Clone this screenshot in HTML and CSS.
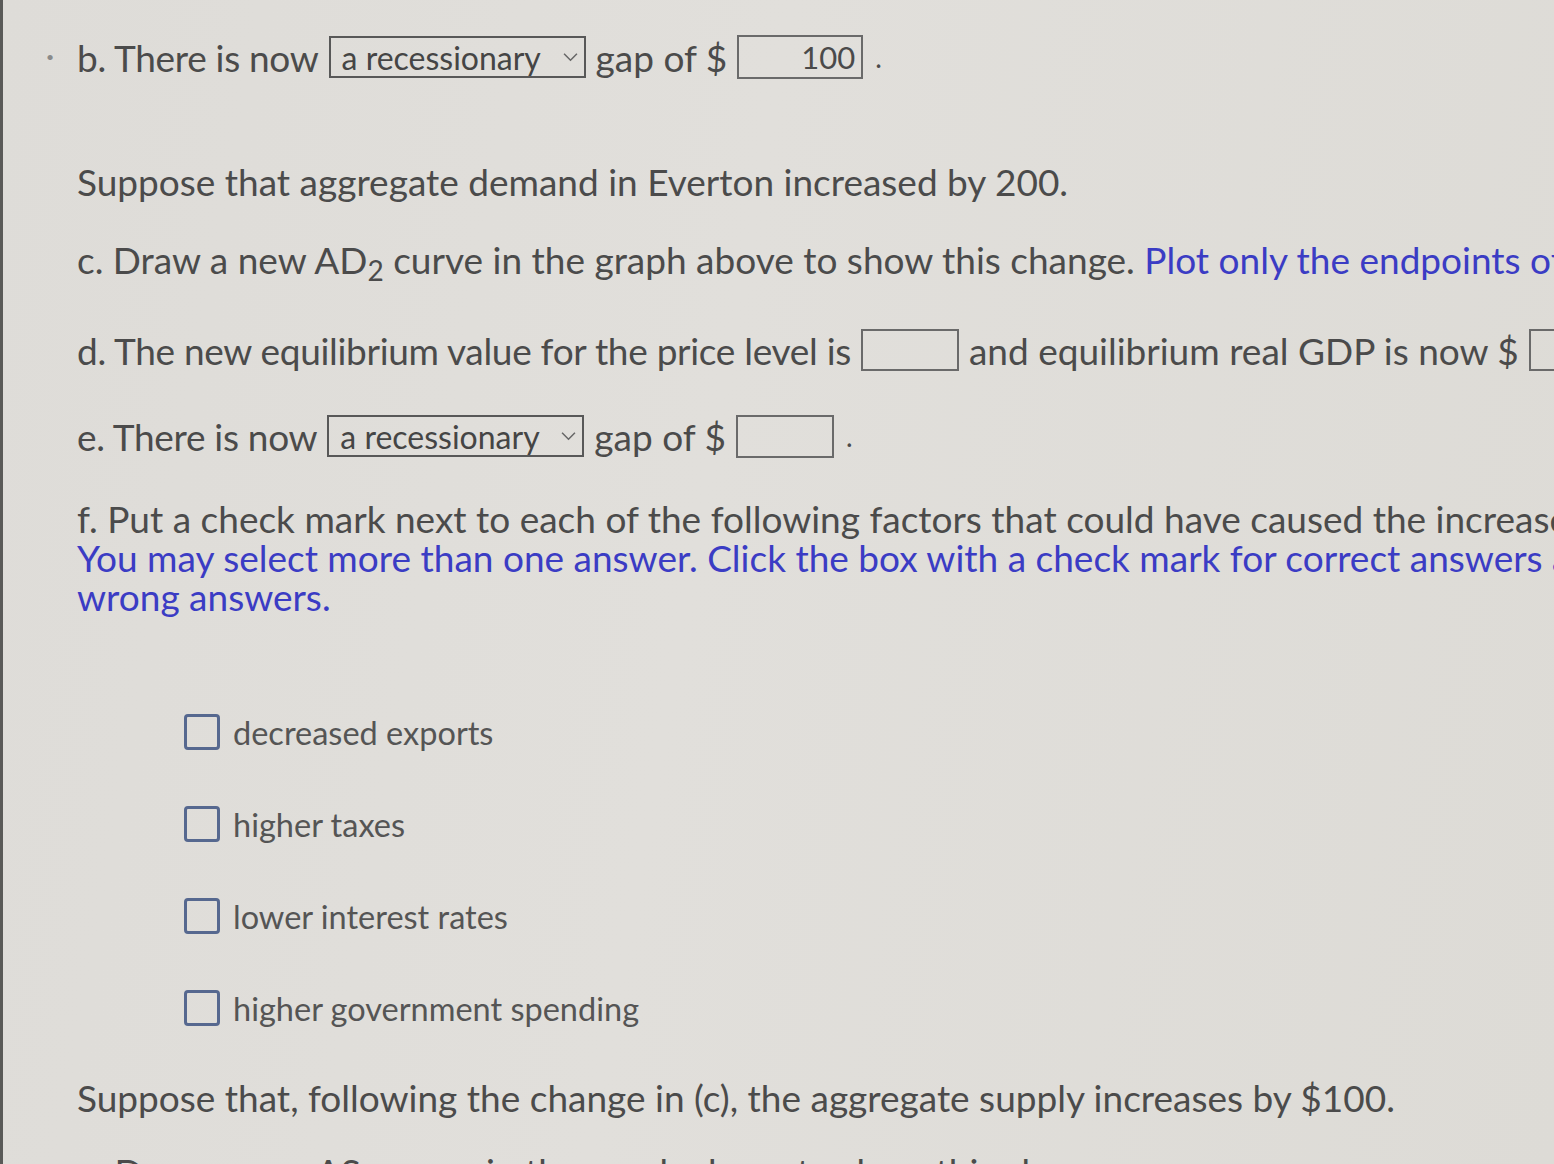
FILE: index.html
```html
<!DOCTYPE html>
<html>
<head>
<meta charset="utf-8">
<link rel="stylesheet" href="styles.css">
</head>
<body>
<div class="page">
  <div class="row row-b">
    <span class="bullet">•</span>
    <span class="tight">b. There is now</span>
    <span class="select">a recessionary<svg class="chev" viewBox="0 0 14 9"><path d="M1 1.5 L7 7.5 L13 1.5" fill="none" stroke="#666" stroke-width="1.4"/></svg></span>
    <span>gap of $</span>
    <span class="input val">100</span>
    <span class="dot">.</span>
  </div>
  <div class="row row-sup">Suppose that aggregate demand in Everton increased by 200.</div>
  <div class="row row-c">c. Draw a new AD<sub>2</sub> curve in the graph above to show this change. <span class="blue">Plot only the endpoints of the curve.</span></div>
  <div class="row row-d">
    <span class="tight">d. The new equilibrium value for the price level is</span>
    <span class="input small"></span>
    <span>and equilibrium real GDP is now $</span>
    <span class="input small"></span>
  </div>
  <div class="row row-e">
    <span class="tight">e. There is now</span>
    <span class="select">a recessionary<svg class="chev" viewBox="0 0 14 9"><path d="M1 1.5 L7 7.5 L13 1.5" fill="none" stroke="#666" stroke-width="1.4"/></svg></span>
    <span>gap of $</span>
    <span class="input small2"></span>
    <span class="dot">.</span>
  </div>
  <div class="para">
    <div class="pline">f. Put a check mark next to each of the following factors that could have caused the increase in aggregate demand.</div>
    <div class="pline blue">You may select more than one answer. Click the box with a check mark for correct answers and click to empty the box for the</div>
    <div class="pline blue">wrong answers.</div>
  </div>
  <div class="options">
    <label class="opt"><span class="box"></span><span class="olabel">decreased exports</span></label>
    <label class="opt"><span class="box"></span><span class="olabel">higher taxes</span></label>
    <label class="opt"><span class="box"></span><span class="olabel">lower interest rates</span></label>
    <label class="opt"><span class="box"></span><span class="olabel">higher government spending</span></label>
  </div>
  <div class="row row-final">Suppose that, following the change in (c), the aggregate supply increases by $100.</div>
  <div class="row row-last">g. Draw a new AS<sub>2</sub> curve in the graph above to show this change.</div>
</div>
</body>
</html>
```

FILE: styles.css
```css
html, body {
  margin: 0;
  padding: 0;
  height: 100%;
  overflow: hidden;
}
body {
  background: linear-gradient(100deg, #dedcd8 0%, #e1dfdb 45%, #dddbd6 100%);
  border-left: 3px solid #5a5a58;
  box-sizing: border-box;
  font-family: Lato, "Open Sans", sans-serif;
  color: #4b4b4b;
  font-size: 37px;
}
.page {
  padding: 34px 0 0 74px;
  white-space: nowrap;
}
.row {
  height: 46px;
  display: flex;
  align-items: center;
  gap: 10px;
}
.row > * { flex-shrink: 0; }
.tight { letter-spacing: -0.3px; }
.row-b { position: relative; }
.bullet {
  position: absolute;
  left: -31px;
  top: 14px;
  font-size: 14px;
  color: #8a8a8a;
}
.row-sup { margin-top: 78px; }
.row-c { margin-top: 33px; display: block; line-height: 46px; }
.row-c sub, .row-last sub { font-size: 28px; vertical-align: -7px; line-height: 0; }
.blue { color: #3b3cc4; }
.row-d { margin-top: 44px; }
.row-e { margin-top: 40px; }
.select {
  box-sizing: border-box;
  width: 257px;
  height: 42px;
  border: 2px solid #585858;
  display: flex;
  align-items: center;
  justify-content: space-between;
  padding: 0 6px 0 11px;
  font-size: 32px;
  color: #454545;
}
.chev { width: 15px; height: 10px; }
.input {
  box-sizing: border-box;
  height: 44px;
  border: 2px solid #6a6a6a;
  display: flex;
  align-items: center;
  justify-content: flex-end;
  padding-right: 6px;
  font-size: 31px;
  color: #4a4a4a;
}
.val { width: 126px; }
.small { width: 98px; height: 42px; }
.small2 { width: 98px; height: 43px; }
.dot { margin-left: 2px; font-size: 28px; }
.para { margin-top: 40px; }
.pline { height: 39px; line-height: 39px; }
.options {
  margin-top: 93px;
  padding-left: 107px;
  display: flex;
  flex-direction: column;
  gap: 46px;
}
.opt {
  height: 46px;
  display: flex;
  align-items: center;
  gap: 13px;
}
.box {
  box-sizing: border-box;
  width: 36px;
  height: 36px;
  border: 3px solid #56688f;
  border-radius: 4px;
}
.olabel { font-size: 32.5px; color: #555; }
.row-final { margin-top: 43px; }
.row-last { margin-top: 29px; display: block; line-height: 46px; }
```
